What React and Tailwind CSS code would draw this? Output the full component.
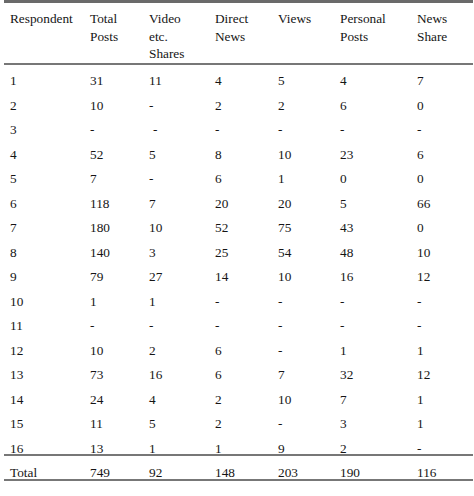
const header = [
    ["Respondent"],
    ["Total", "Posts"],
    ["Video", "etc.", "Shares"],
    ["Direct", "News"],
    ["Views"],
    ["Personal", "Posts"],
    ["News", "Share"],
];

const rows = [
    ["1", "31", "11", "4", "5", "4", "7"],
    ["2", "10", "-", "2", "2", "6", "0"],
    ["3", "-", " -", "-", "-", "-", "-"],
    ["4", "52", "5", "8", "10", "23", "6"],
    ["5", "7", "-", "6", "1", "0", "0"],
    ["6", "118", "7", "20", "20", "5", "66"],
    ["7", "180", "10", "52", "75", "43", "0"],
    ["8", "140", "3", "25", "54", "48", "10"],
    ["9", "79", "27", "14", "10", "16", "12"],
    ["10", "1", "1", "-", "-", "-", "-"],
    ["11", "-", "-", "-", "-", "-", "-"],
    ["12", "10", "2", "6", "-", "1", "1"],
    ["13", "73", "16", "6", "7", "32", "12"],
    ["14", "24", "4", "2", "10", "7", "1"],
    ["15", "11", "5", "2", "-", "3", "1"],
    ["16", "13", "1", "1", "9", "2", "-"],
];

const total = ["Total", "749", "92", "148", "203", "190", "116"];

const cols = "grid grid-cols-[80px_59px_66px_63px_62px_77px_1fr] pl-[6px]";

function Cell({ text }) {
    // a leading space in the source shifts the dash a little
    const shifted = text.startsWith(" ");
    return <div className={shifted ? "pl-[4px]" : ""}>{text.trim()}</div>;
}

export default function App() {
    return (
        <div className="w-[474px] h-[496px] bg-white text-[#151515] text-[13.3px] font-['Liberation_Serif',_'Times_New_Roman',_serif]">
            <div className="ml-[4px] w-[469px]">
                {/* top rule of the table (caption is cut off above) */}
                <div className="h-[3px] bg-[#6a6a6a]"></div>

                {/* column headings */}
                <div className={`${cols} pt-[7px] leading-[17.5px] border-b-2 border-[#777]`}>
                    {header.map((lines, i) => (
                        <div key={i} className="flex flex-col">
                            {lines.map((l) => (
                                <span key={l}>{l}</span>
                            ))}
                        </div>
                    ))}
                </div>

                {/* body */}
                <div>
                    {rows.map((r, i) => (
                        <div
                            key={r[0]}
                            className={`${cols} h-[24.5px] pt-[7.5px] leading-[17px] ${i === rows.length - 1 ? "h-[24px] border-b-2 border-[#777]" : ""}`}
                        >
                            {r.map((c, j) => (
                                <Cell key={j} text={c} />
                            ))}
                        </div>
                    ))}
                </div>

                {/* totals */}
                <div className={`${cols} h-[25px] pt-[7.5px] leading-[17px] border-b-2 border-[#777]`}>
                    {total.map((c, j) => (
                        <Cell key={j} text={c} />
                    ))}
                </div>
            </div>
        </div>
    );
}
